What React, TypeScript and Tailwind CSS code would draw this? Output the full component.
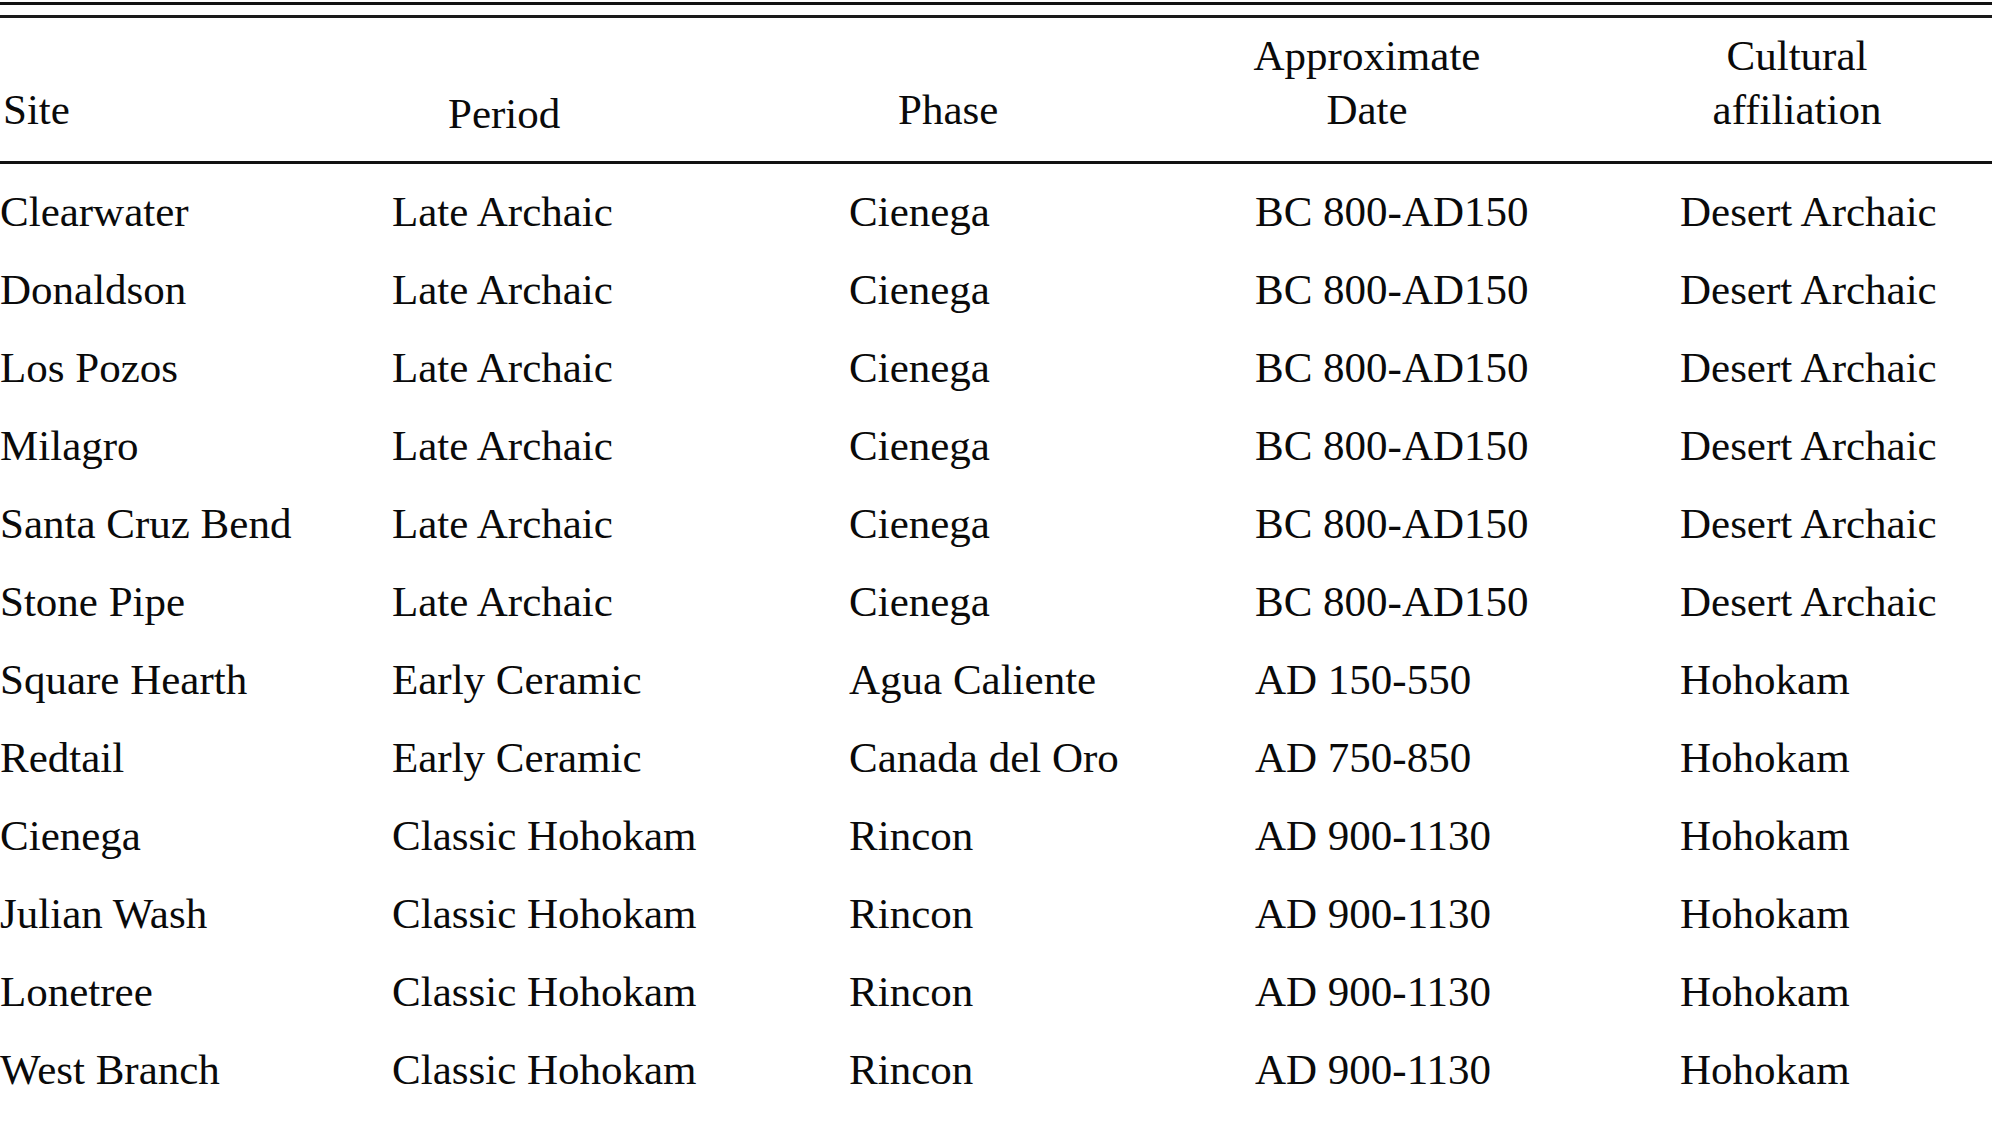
const ROWS: [string, string, string, string, string][] = [
  ["Clearwater", "Late Archaic", "Cienega", "BC 800-AD150", "Desert Archaic"],
  ["Donaldson", "Late Archaic", "Cienega", "BC 800-AD150", "Desert Archaic"],
  ["Los Pozos", "Late Archaic", "Cienega", "BC 800-AD150", "Desert Archaic"],
  ["Milagro", "Late Archaic", "Cienega", "BC 800-AD150", "Desert Archaic"],
  ["Santa Cruz Bend", "Late Archaic", "Cienega", "BC 800-AD150", "Desert Archaic"],
  ["Stone Pipe", "Late Archaic", "Cienega", "BC 800-AD150", "Desert Archaic"],
  ["Square Hearth", "Early Ceramic", "Agua Caliente", "AD 150-550", "Hohokam"],
  ["Redtail", "Early Ceramic", "Canada del Oro", "AD 750-850", "Hohokam"],
  ["Cienega", "Classic Hohokam", "Rincon", "AD 900-1130", "Hohokam"],
  ["Julian Wash", "Classic Hohokam", "Rincon", "AD 900-1130", "Hohokam"],
  ["Lonetree", "Classic Hohokam", "Rincon", "AD 900-1130", "Hohokam"],
  ["West Branch", "Classic Hohokam", "Rincon", "AD 900-1130", "Hohokam"],
];

const GRID = "grid grid-cols-[392px_457px_406px_425px_1fr]";

export default function App() {
  return (
    <main className="min-h-[1129px] w-full overflow-hidden bg-white text-[43px] text-[#0a0a0a] [font-family:'Liberation_Serif',serif]">
      {/* double rule at the top */}
      <div className="mt-[2px] h-[3px] bg-[#111]" />
      <div className="mt-[10px] h-[3px] bg-[#1a1a1a]" />

      {/* header */}
      <div className={`${GRID} h-[143px] items-end pb-[24px] leading-[54px]`}>
        <div className="pl-[3px]">Site</div>
        <div className="pl-[56px] translate-y-[4px]">Period</div>
        <div className="pl-[49px]">Phase</div>
        <div className="-ml-[4px] flex w-[232px] flex-col items-center">
          <span>Approximate</span>
          <span>Date</span>
        </div>
        <div className="ml-[29px] flex w-[176px] flex-col items-center">
          <span>Cultural</span>
          <span>affiliation</span>
        </div>
      </div>
      <div className="h-[3px] bg-[#111]" />

      {/* body */}
      <div className="pt-[8px]">
        {ROWS.map((r) => (
          <div key={r[0]} className={`${GRID} h-[78px] items-center leading-none`}>
            {r.map((cell, i) => (
              <div key={i} className="whitespace-nowrap">
                {cell}
              </div>
            ))}
          </div>
        ))}
      </div>
    </main>
  );
}
